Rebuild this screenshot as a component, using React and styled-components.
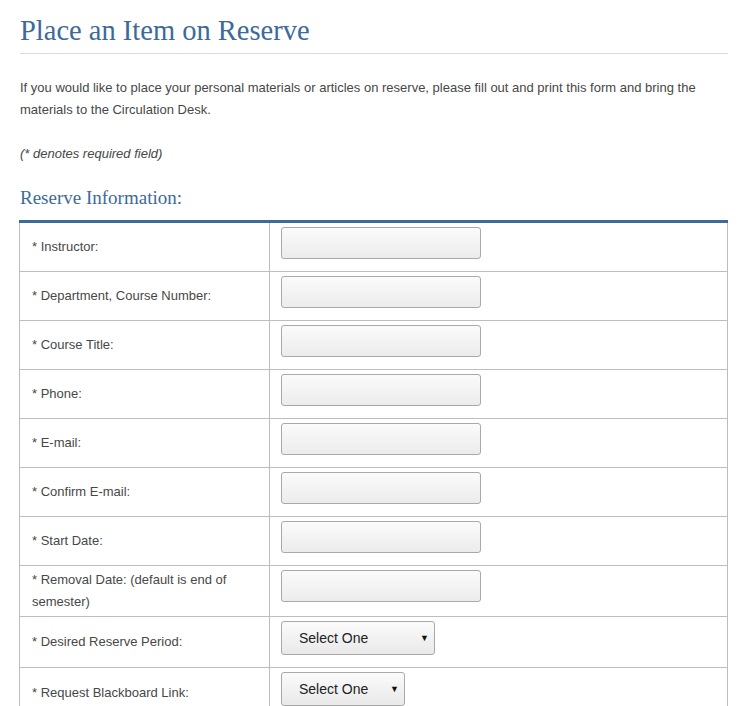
import React from 'react'
import styled, { createGlobalStyle } from 'styled-components'

const colorBrand = '#3c6a9a'
const colorText = '#474747'
const colorRule = '#bdbdbd'

const GlobalStyle = createGlobalStyle`
  body {
    margin: 0;
    background: #fff;
    font-family: "Liberation Sans", Arial, sans-serif;
    color: ${colorText};
  }
`

const Page = styled.div`
  padding: 14px 15px 0 19px;
`

const Title = styled.h1`
  margin: 0 0 0 1px;
  padding-bottom: 5px;
  border-bottom: 1px solid #dadada;
  font-family: "Liberation Serif", serif;
  font-weight: normal;
  font-size: 28.5px;
  line-height: 34px;
  color: ${colorBrand};
`

const Intro = styled.p`
  margin: 23px 0 0 1px;
  font-size: 13px;
  line-height: 22px;
`

const Note = styled.p`
  margin: 22px 0 0 1px;
  font-size: 13px;
  line-height: 22px;
  font-style: italic;
`

const SectionTitle = styled.h2`
  margin: 19px 0 0 1px;
  font-family: "Liberation Serif", serif;
  font-weight: normal;
  font-size: 19px;
  line-height: 28px;
  color: ${colorBrand};
`

const Table = styled.table`
  width: 709px;
  margin-top: 8px;
  border-collapse: collapse;
  border-top: 3px solid ${colorBrand};
  font-size: 13px;
`

const Row = styled.tr`
  border-bottom: 1px solid ${colorRule};
`

const LabelCell = styled.td`
  width: 225px;
  padding: 3px 12px;
  line-height: 22px;
  vertical-align: middle;
  border-left: 1px solid ${colorRule};
  border-right: 1px solid ${colorRule};
`

const FieldCell = styled.td`
  padding: 4px 12px 12px 11px;
  vertical-align: top;
  border-right: 1px solid ${colorRule};
`

const TextInput = styled.input`
  display: block;
  box-sizing: border-box;
  width: 200px;
  height: 32px;
  margin: 0;
  border: 1px solid #a9a9a9;
  border-radius: 3px;
  background: linear-gradient(#fbfbfb, #ececec);
`

const Select = styled.div`
  box-sizing: border-box;
  display: flex;
  align-items: center;
  justify-content: space-between;
  width: ${props => props.width}px;
  height: 34px;
  padding: 0 5px 0 17px;
  border: 1px solid #a9a9a9;
  border-radius: 3px;
  background: linear-gradient(#fbfbfb, #e9e9e9);
  font-size: 14px;
  color: #222;
`

const Caret = styled.span`
  font-size: 9px;
  color: #111;
`

const fields = [
  '* Instructor:',
  '* Department, Course Number:',
  '* Course Title:',
  '* Phone:',
  '* E-mail:',
  '* Confirm E-mail:',
  '* Start Date:',
  '* Removal Date: (default is end of semester)',
]

const selects = [
  { label: '* Desired Reserve Period:', width: 154 },
  { label: '* Request Blackboard Link:', width: 124 },
]

export default function App() {
  return (
    <>
      <GlobalStyle />
      <Page>
        <Title>Place an Item on Reserve</Title>
        <Intro>
          If you would like to place your personal materials or articles on reserve, please fill out and print this form and bring the materials to the Circulation Desk.
        </Intro>
        <Note>(* denotes required field)</Note>
        <SectionTitle>Reserve Information:</SectionTitle>
        <Table>
          <tbody>
            {fields.map(label => (
              <Row key={label}>
                <LabelCell>{label}</LabelCell>
                <FieldCell>
                  <TextInput type="text" />
                </FieldCell>
              </Row>
            ))}
            {selects.map(item => (
              <Row key={item.label}>
                <LabelCell>{item.label}</LabelCell>
                <FieldCell>
                  <Select width={item.width}>
                    Select One
                    <Caret>▼</Caret>
                  </Select>
                </FieldCell>
              </Row>
            ))}
          </tbody>
        </Table>
      </Page>
    </>
  )
}
